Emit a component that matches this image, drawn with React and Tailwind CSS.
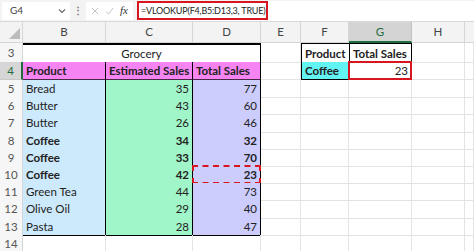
import React from 'react'

const COLS = 'grid grid-cols-[23px_83px_87px_68px_40px_48px_63px_53px_1fr]'
const GRID = 'border-r border-b border-[#e3e3e3]'

const rows = [
  { n: 5, name: 'Bread', est: 35, total: 77 },
  { n: 6, name: 'Butter', est: 43, total: 60 },
  { n: 7, name: 'Butter', est: 26, total: 46 },
  { n: 8, name: 'Coffee', est: 34, total: 32, bold: true },
  { n: 9, name: 'Coffee', est: 33, total: 70, bold: true },
  { n: 10, name: 'Coffee', est: 42, total: 23, bold: true, marked: true },
  { n: 11, name: 'Green Tea', est: 44, total: 73 },
  { n: 12, name: 'Olive Oil', est: 29, total: 40 },
  { n: 13, name: 'Pasta', est: 28, total: 47 },
]

const Cell = ({ className = '', children }) => (
  <div className={`relative flex items-center px-[3px] whitespace-nowrap ${className}`}>
    {children}
  </div>
)

const RowNum = ({ n, active }) => (
  <div
    className={`flex items-center justify-center border-r border-b ${
      active
        ? 'bg-[#d6d6d6] text-[#1e6b3c] border-r-[#1e6b3c] border-r-2 border-b-[#c8c8c8]'
        : 'bg-[#f6f6f6] text-[#555] border-[#d6d6d6]'
    }`}
  >
    {n}
  </div>
)

const Empty = ({ count }) =>
  Array.from({ length: count }).map((_, i) => <Cell key={i} className={GRID} />)

const FormulaBar = () => (
  <div className="flex items-center h-[22px] bg-[#f3f3f3] border-b border-[#d9d9d9] text-[10px]">
    <div className="flex items-center justify-between w-[68px] h-[18px] ml-[2px] bg-white pl-[8px] pr-[4px] text-[#444]">
      <span>G4</span>
      <svg width="8" height="6" viewBox="0 0 8 6">
        <path d="M1 1.5 L4 4.5 L7 1.5" fill="none" stroke="#666" strokeWidth="1.1" />
      </svg>
    </div>
    <span className="w-[16px] text-center text-[#777] font-bold">⋮</span>
    <div className="flex items-center gap-[6px] w-[47px] h-[18px] bg-white px-[5px]">
      <svg width="8" height="8" viewBox="0 0 8 8">
        <path d="M1 1 L7 7 M7 1 L1 7" stroke="#c4c4c4" strokeWidth="1" />
      </svg>
      <svg width="9" height="8" viewBox="0 0 9 8">
        <path d="M1 4.5 L3.5 7 L8 1" fill="none" stroke="#c4c4c4" strokeWidth="1" />
      </svg>
      <span className="font-['Liberation_Serif',serif] italic text-[11px] text-[#333]">fx</span>
    </div>
    <div className="flex-1 h-[20px] ml-[4px] bg-white flex items-center">
      <div className="h-[19px] w-[131px] border-2 border-[#d8161f] flex items-center pl-[2px] text-[9px] text-[#222] tracking-[-0.2px] whitespace-nowrap overflow-hidden">
        =VLOOKUP(F4,B5:D13,3, TRUE)
      </div>
    </div>
  </div>
)

const HeaderRow = () => (
  <div className={`${COLS} h-[21px] bg-[#f3f3f3] text-[#444] text-[11.5px]`}>
    <div className="relative border-r border-b border-[#d6d6d6]">
      <svg className="absolute right-[2px] bottom-[3px]" width="11" height="11" viewBox="0 0 11 11">
        <path d="M11 0 L11 11 L0 11 Z" fill="#bcbcbc" />
      </svg>
    </div>
    {['B', 'C', 'D', 'E', 'F'].map((c) => (
      <div key={c} className="flex items-center justify-center border-r border-b border-[#d6d6d6]">
        {c}
      </div>
    ))}
    <div className="flex items-center justify-center bg-[#d4d4d4] border-r border-[#c2c2c2] border-b-2 border-b-[#1e6b3c] text-[#1e6b3c]">
      G
    </div>
    <div className="flex items-center justify-center border-r border-b border-[#d6d6d6]">H</div>
    <div className="border-b border-[#d6d6d6]" />
  </div>
)

export default function App() {
  return (
    <div className="w-[474px] h-[251px] overflow-hidden bg-white font-['Lato',sans-serif] text-[#222]">
      <FormulaBar />
      <HeaderRow />

      <div className="text-[11.5px]">
        {/* row 3: table title and lookup headers */}
        <div className={`${COLS} h-[19px]`}>
          <RowNum n={3} />
          <Cell className="col-span-3 justify-center border-t-2 border-t-black border-r border-r-black border-b border-b-black/40">
            Grocery
          </Cell>
          <Cell className={GRID} />
          <Cell className="font-bold border border-black border-r-0">Product</Cell>
          <Cell className="font-bold border border-black">Total Sales</Cell>
          <Empty count={2} />
        </div>

        {/* row 4: column titles and lookup result */}
        <div className={`${COLS} h-[18px]`}>
          <RowNum n={4} active />
          <Cell className="bg-[#f684f2] font-bold border-r border-r-black border-b border-b-black/70">Product</Cell>
          <Cell className="bg-[#f684f2] font-bold border-r border-r-black border-b border-b-black/70">Estimated Sales</Cell>
          <Cell className="bg-[#f684f2] font-bold border-r border-r-black border-b border-b-black/70">Total Sales</Cell>
          <Cell className={GRID} />
          <Cell className="bg-[#62f3f3] font-bold border-l border-r border-b border-black">Coffee</Cell>
          <Cell className="justify-end border-r border-b border-black">
            23
            <div className="absolute -inset-[1px] border-2 border-[#d8161f]" />
          </Cell>
          <Empty count={2} />
        </div>

        {rows.map((r) => {
          const last = r.n === 13
          const edge = `border-r border-r-black border-b ${last ? 'border-b-black' : 'border-b-black/20'}`
          const weight = r.bold ? 'font-bold' : ''
          return (
            <div key={r.n} className={`${COLS} h-[17.2px]`}>
              <RowNum n={r.n} />
              <Cell className={`bg-[#cde9fc] ${edge} ${weight}`}>{r.name}</Cell>
              <Cell className={`bg-[#a1f6c9] justify-end ${edge} ${weight}`}>{r.est}</Cell>
              <Cell className={`bg-[#ccccfd] justify-end ${edge} ${weight}`}>
                {r.total}
                {r.marked && (
                  <div className="absolute -inset-[1px] border-2 border-dashed border-[#d8161f]" />
                )}
              </Cell>
              <Empty count={5} />
            </div>
          )
        })}

        <div className={`${COLS} h-[17.2px]`}>
          <RowNum n={14} />
          <Empty count={8} />
        </div>
      </div>
    </div>
  )
}
